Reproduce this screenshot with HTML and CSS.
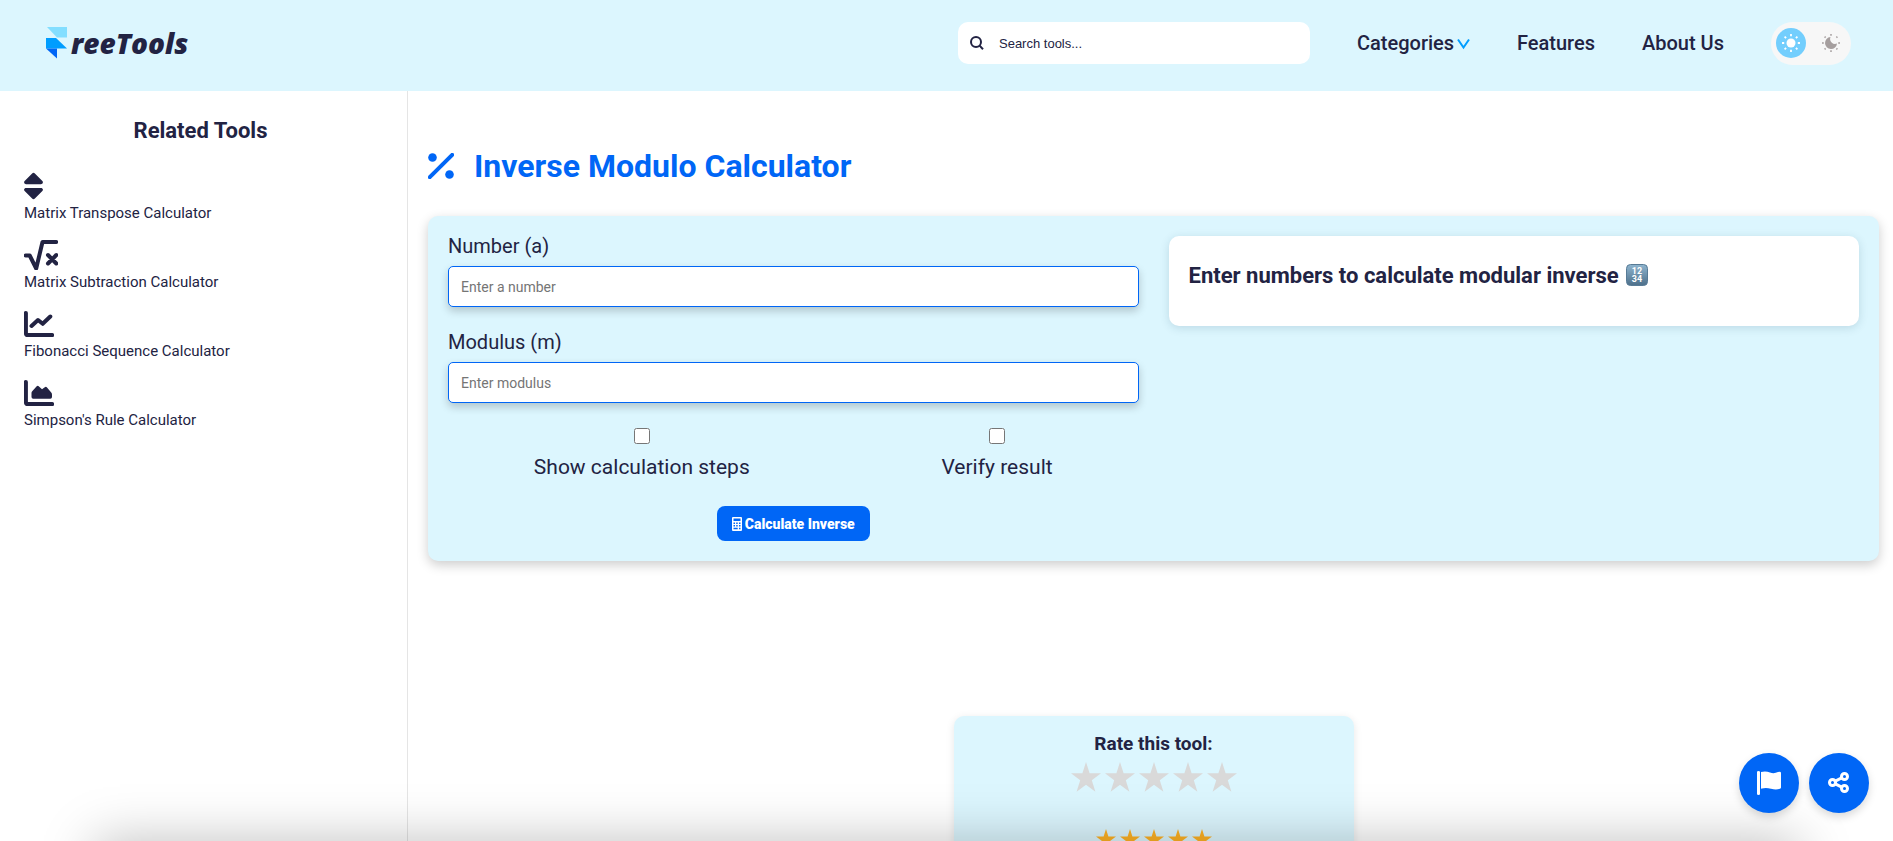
FILE: index.html
```
<!DOCTYPE html>
<html lang="en">
  <head>
    <meta charset="UTF-8" />
    <meta name="viewport" content="width=device-width, initial-scale=1.0" />
    <title>Inverse Modulo Calculator</title>
    <link rel="stylesheet" href="styles.css">
  </head>
  <body>
    <header class="header">
      <a class="logo" href="#">
        <svg class="logo-mark" viewBox="0 0 22 32" aria-hidden="true">
          <path fill="#83deff" d="M1 0h20v10.500H11z"/>
          <path fill="#009dff" d="M0 11h10l11 10.500H0z"/>
          <path fill="#0066f6" d="M0 21.500h11v10z"/>
        </svg>
        <span>reeTools</span>
      </a>
      <nav class="nav">
        <div class="search">
          <svg viewBox="0 0 14 14" aria-hidden="true"><circle cx="6" cy="6" r="5" /><path d="M9.600 9.600L13 13.200"/></svg>
          <input type="text" placeholder="Search tools..." aria-label="Search tools">
        </div>
        <a class="nav-link" href="#">Categories
          <svg viewBox="0 0 13 12" aria-hidden="true"><path d="M1 1.500l5.500 8 5.500-8"/></svg>
        </a>
        <a class="nav-link" href="#">Features</a>
        <a class="nav-link" href="#">About Us</a>
        <div class="theme">
          <button class="theme-btn active" type="button" aria-label="Light theme">
            <svg viewBox="0 0 20 20">
              <circle cx="10" cy="10" r="4.500" fill="currentColor"/>
              <path d="M10 1v2.200M10 16.800V19M1 10h2.200M16.800 10H19M3.600 3.600l1.500 1.500M14.900 14.900l1.500 1.500M3.600 16.400l1.500-1.500M14.900 5.100l1.500-1.500" stroke="currentColor" stroke-width="1.800"/>
            </svg>
          </button>
          <button class="theme-btn" type="button" aria-label="Dark theme">
            <svg viewBox="0 0 20 20">
              <path fill="currentColor" d="M9.500 4A6 6 0 1 0 16 10.500A5 5 0 0 1 9.500 4z"/>
              <path d="M10 1v1.800M10 17.200V19M1 10h1.800M17.200 10H19M3.600 3.600l1 1M15.400 15.400l1 1M3.600 16.400l1-1M15.400 4.600l1-1" stroke="currentColor" stroke-width="1.500"/>
            </svg>
          </button>
        </div>
      </nav>
    </header>

    <div class="layout">
      <aside class="sidebar">
        <h2>Related Tools</h2>
        <ul class="tools">
          <li><a href="#">
            <svg viewBox="0 0 320 512" width="19" height="30"><path d="M137 41c13-13 33-13 46 0l128 128c9 9 12 23 7 35s-17 20-30 20H32c-13 0-25-8-30-20s-2-26 7-35zM137 471L9 343c-9-9-12-23-7-35s17-20 30-20h256c13 0 25 8 30 20s2 26-7 35L183 471c-13 13-33 13-46 0z"/></svg>
            <span>Matrix Transpose Calculator</span>
          </a></li>
          <li><a href="#">
            <svg viewBox="0 0 34 30" height="30" width="34" class="line"><path d="M1.700 15.500h4l6.500 13L18.500 2h13.700M24 15l8.300 8.500M32.300 15L24 23.500"/></svg>
            <span>Matrix Subtraction Calculator</span>
          </a></li>
          <li><a href="#">
            <svg viewBox="0 0 30 30" height="30" width="30" class="line"><path d="M1.900 3.900v20.200q0 2 2 2h24.200M7.500 17l6.500-6 4.700 3.800L26.300 7.500"/></svg>
            <span>Fibonacci Sequence Calculator</span>
          </a></li>
          <li><a href="#">
            <svg viewBox="0 0 30 30" height="30" width="30" class="line"><path d="M1.900 3.900v20.200q0 2 2 2h24.200"/><path class="fill" d="M7.500 19v-4q0-1 .7-1.700l4.500-5q1-1 2 0l3.300 3 2.800-2q1.200-1 2.200.3l4 4.700q1 1 1 2.400V19q0 1.700-1.700 1.700H9.200q-1.700 0-1.700-1.700z"/></svg>
            <span>Simpson's Rule Calculator</span>
          </a></li>
        </ul>
      </aside>

      <main class="main">
        <h1 class="title">
          <svg viewBox="0 0 26 26" aria-hidden="true"><circle cx="4.500" cy="4.500" r="4.300"/><circle cx="21.500" cy="21.500" r="4.300"/><path d="M1.800 24.200L24.200 1.800"/></svg>
          Inverse Modulo Calculator
        </h1>

        <section class="calculator">
          <form class="form">
            <label for="number">Number (a)</label>
            <input class="field" type="text" id="number" placeholder="Enter a number">
            <label for="modulus">Modulus (m)</label>
            <input class="field" type="text" id="modulus" placeholder="Enter modulus">
            <div class="options">
              <div class="option">
                <input type="checkbox" id="steps">
                <label for="steps">Show calculation steps</label>
              </div>
              <div class="option">
                <input type="checkbox" id="verify">
                <label for="verify">Verify result</label>
              </div>
            </div>
            <button class="btn" type="button">
              <svg viewBox="0 0 10 14" aria-hidden="true"><path fill="#fff" fill-rule="evenodd" d="M1 0h8q1 0 1 1v12q0 1-1 1H1q-1 0-1-1V1q0-1 1-1zm.500 1.500v2.500h7V1.500zM1.500 5.500v1.500H3V5.500zm2.700 0v1.500h1.500V5.500zm2.800 0v1.500h1.500V5.500zM1.500 8v1.500H3V8zm2.700 0v1.500h1.500V8zM7 8v1.500h1.500V8zM1.500 10.700v1.500h4.200v-1.500zm5.500 0v1.500h1.500v-1.500z"/></svg>
              Calculate Inverse
            </button>
          </form>
          <div class="result">
            <h3>Enter numbers to calculate modular inverse
              <svg viewBox="0 0 22 22" role="img" aria-label="numbers">
                <defs>
                  <linearGradient id="key" x1="0" y1="0" x2="0" y2="1">
                    <stop offset="0" stop-color="#8fb5cf"/>
                    <stop offset="1" stop-color="#4d6f8a"/>
                  </linearGradient>
                </defs>
                <rect x="0.500" y="0.500" width="21" height="21" rx="4" fill="url(#key)" stroke="#587b96"/>
                <text x="11" y="10" text-anchor="middle">12</text>
                <text x="11" y="18" text-anchor="middle">34</text>
              </svg>
            </h3>
          </div>
        </section>

        <section class="rating">
          <h4>Rate this tool:</h4>
          <svg width="0" height="0" class="defs"><symbol id="star" viewBox="0 0 30 30"><path d="M15 0l3.600 11.200H30l-9.200 7 3.600 11.600L15 22.700l-9.400 7.100 3.600-11.600-9.200-7h11.400z"/></symbol></svg>
          <div class="stars">
            <button type="button" aria-label="1 star"><svg><use href="#star"/></svg></button>
            <button type="button" aria-label="2 stars"><svg><use href="#star"/></svg></button>
            <button type="button" aria-label="3 stars"><svg><use href="#star"/></svg></button>
            <button type="button" aria-label="4 stars"><svg><use href="#star"/></svg></button>
            <button type="button" aria-label="5 stars"><svg><use href="#star"/></svg></button>
          </div>
          <div class="average">
            <svg><use href="#star"/></svg>
            <svg><use href="#star"/></svg>
            <svg><use href="#star"/></svg>
            <svg><use href="#star"/></svg>
            <svg><use href="#star"/></svg>
          </div>
        </section>
      </main>
    </div>

    <!-- bottom sheet, closed: only its shadow shows -->
    <div class="sheet"></div>

    <div class="floating">
      <button type="button" aria-label="Report">
        <svg viewBox="0 0 24 24"><path fill="#fff" d="M0 1q0-1 1.500-1T3 1v22q0 1-1.500 1T0 23zM4 1q5-1 9 0.500t8-.500q3-1 3 1v14.500q0 1-1 1.300-4 1.500-9 0T5 17.500l-1 .300z"/></svg>
      </button>
      <button type="button" aria-label="Share">
        <svg viewBox="0 0 24 24" fill="none" stroke="#fff" stroke-width="3"><circle cx="5.500" cy="11.500" r="3"/><circle cx="17.500" cy="5.500" r="3"/><circle cx="17.500" cy="17.500" r="3"/><path d="M8.300 10.100l6.400-3.200M8.300 12.900l6.400 3.200"/></svg>
      </button>
    </div>
  </body>
</html>
```
FILE: styles.css
```
* {
  box-sizing: border-box;
}
body {
  margin: 0;
  height: 100vh;
  overflow: hidden;
  display: flex;
  flex-direction: column;
  font-family: Roboto, sans-serif;
  font-size: 15px;
  color: #222343;
  background: #fff;
}
a {
  color: inherit;
  text-decoration: none;
}
button {
  border: none;
  padding: 0;
  cursor: pointer;
  font-family: inherit;
}
h1, h2, h3, h4, ul {
  margin: 0;
  padding: 0;
}

/* header */
.header {
  display: flex;
  align-items: center;
  justify-content: space-between;
  flex-shrink: 0;
  height: 91px;
  padding: 0 42px 5px 46px;
  background: #dcf6fe;
}
.logo {
  display: flex;
  align-items: center;
  gap: 3px;
  font-family: "Open Sans", sans-serif;
  font-size: 28px;
  font-weight: 800;
  font-style: italic;
}
.logo-mark {
  width: 22px;
  height: 32px;
}
.nav {
  display: flex;
  align-items: center;
  gap: 47px;
}
.search {
  display: flex;
  align-items: center;
  width: 352px;
  height: 42px;
  padding: 0 12px;
  gap: 13px;
  border-radius: 10px;
  background: #fff;
}
.search svg {
  width: 14px;
  height: 14px;
  fill: none;
  stroke: #222343;
  stroke-width: 2;
}
.search input {
  flex: 1;
  border: none;
  outline: none;
  font-family: "Liberation Sans", sans-serif;
  font-size: 13px;
}
.search input::placeholder {
  color: #222343;
}
.nav-link {
  font-size: 20px;
  font-weight: 500;
  line-height: 24px;
  white-space: nowrap;
}
.nav-link svg {
  width: 13px;
  height: 12px;
  margin-left: -2px;
  fill: none;
  stroke: #009dff;
  stroke-width: 2;
}
.theme {
  display: flex;
  align-items: center;
  justify-content: space-between;
  width: 80px;
  height: 43px;
  padding: 0 5px;
  border-radius: 22px;
  background: #f7f7f7;
}
.theme-btn {
  display: grid;
  place-items: center;
  width: 30px;
  height: 30px;
  border-radius: 50%;
  background: none;
  color: #a59e9e;
}
.theme-btn.active {
  background: #73cefd;
  color: #fff;
}
.theme-btn svg {
  width: 20px;
  height: 20px;
}

/* page */
.layout {
  display: flex;
  flex: 1;
  min-height: 0;
}
.sidebar {
  width: 408px;
  padding: 28px 30px 24px 24px;
  border-right: 1px solid #e5e5e5;
}
.sidebar h2 {
  font-size: 22px;
  line-height: 24px;
  text-align: center;
}
.tools {
  display: flex;
  flex-direction: column;
  gap: 18px;
  margin-top: 28px;
  list-style: none;
}
.tools a {
  display: flex;
  flex-direction: column;
  gap: 4px;
  line-height: 17px;
}
.tools svg {
  fill: #222343;
}
.tools .line {
  fill: none;
  stroke: #222343;
  stroke-width: 4;
  stroke-linecap: round;
  stroke-linejoin: round;
}
.tools .fill {
  fill: #222343;
  stroke: none;
}
.main {
  flex: 1;
  padding: 56px 14px 0 20px;
}
.title {
  display: flex;
  align-items: center;
  gap: 20px;
  font-size: 32px;
  line-height: 38px;
  color: #0066f6;
}
.title svg {
  width: 26px;
  height: 26px;
  fill: #0066f6;
  stroke: none;
}
.title path {
  stroke: #0066f6;
  stroke-width: 4;
  stroke-linecap: round;
}

/* calculator */
.calculator {
  display: grid;
  grid-template-columns: 1fr 1fr;
  align-items: start;
  gap: 30px;
  margin-top: 31px;
  padding: 20px;
  border-radius: 10px;
  background: #dcf6fe;
  box-shadow: 0 4px 12px rgba(0, 0, 0, 0.2);
}
.form {
  display: flex;
  flex-direction: column;
}
.form label {
  font-size: 20px;
  line-height: 20px;
}
.field {
  height: 41px;
  margin: 10px 0 25px;
  padding: 0 12px;
  border: 1px solid #0066f6;
  border-radius: 5px;
  background: #fff;
  box-shadow: 0 4px 8px rgba(0, 0, 0, 0.2);
  font-family: inherit;
  font-size: 14px;
}
.field::placeholder {
  color: #757575;
}
.options {
  display: flex;
  justify-content: space-around;
  gap: 20px;
  margin-bottom: 29px;
}
.option {
  display: flex;
  flex-direction: column;
  align-items: center;
  gap: 13px;
}
.option input {
  width: 16px;
  height: 16px;
  margin: 0;
}
.form .option label {
  font-size: 21px;
}
.btn {
  display: flex;
  align-items: center;
  align-self: center;
  gap: 3px;
  height: 35px;
  padding: 0 15px;
  border-radius: 8px;
  background: #0066f6;
  color: #fff;
  font-size: 14px;
  font-weight: 900;
}
.btn svg {
  width: 10px;
  height: 14px;
}
.result {
  padding: 25px 20px 35px;
  border-radius: 10px;
  background: #fff;
  box-shadow: 0 2px 10px rgba(0, 60, 90, 0.15);
}
.result h3 {
  font-size: 22px;
  line-height: 30px;
}
.result svg {
  width: 22px;
  height: 22px;
  margin-left: 2px;
  vertical-align: -3px;
}
.result text {
  font-size: 9px;
  font-weight: 700;
  fill: #fff;
}

/* rating */
.rating {
  width: 400px;
  height: 200px;
  margin: 155px auto 0;
  padding: 18px 20px;
  border-radius: 10px;
  background: #dcf6fe;
  box-shadow: 0 2px 8px rgba(0, 0, 0, 0.1);
}
.rating h4 {
  font-size: 19px;
  line-height: 20px;
  text-align: center;
}
.defs {
  display: block;
}
.stars, .average {
  display: flex;
  justify-content: center;
  gap: 4px;
  margin-top: 8px;
}
.stars button {
  width: 30px;
  height: 30px;
  background: none;
}
.stars svg {
  display: block;
  width: 30px;
  height: 30px;
  fill: #d9d9d9;
}
.average {
  margin-top: 37px;
}
.average svg {
  width: 20px;
  height: 20px;
  fill: #ffb224;
}

.sheet {
  position: fixed;
  top: 100%;
  left: 5%;
  width: 90%;
  height: 300px;
  box-shadow: 0 0 50px rgba(0, 0, 0, 0.25);
}
.floating {
  position: fixed;
  right: 24px;
  bottom: 28px;
  display: flex;
  gap: 10px;
}
.floating button {
  display: grid;
  place-items: center;
  width: 60px;
  height: 60px;
  border-radius: 50%;
  background: #0066f6;
  box-shadow: 0 4px 8px rgba(0, 0, 0, 0.15);
}
.floating svg {
  width: 24px;
  height: 24px;
}
```
